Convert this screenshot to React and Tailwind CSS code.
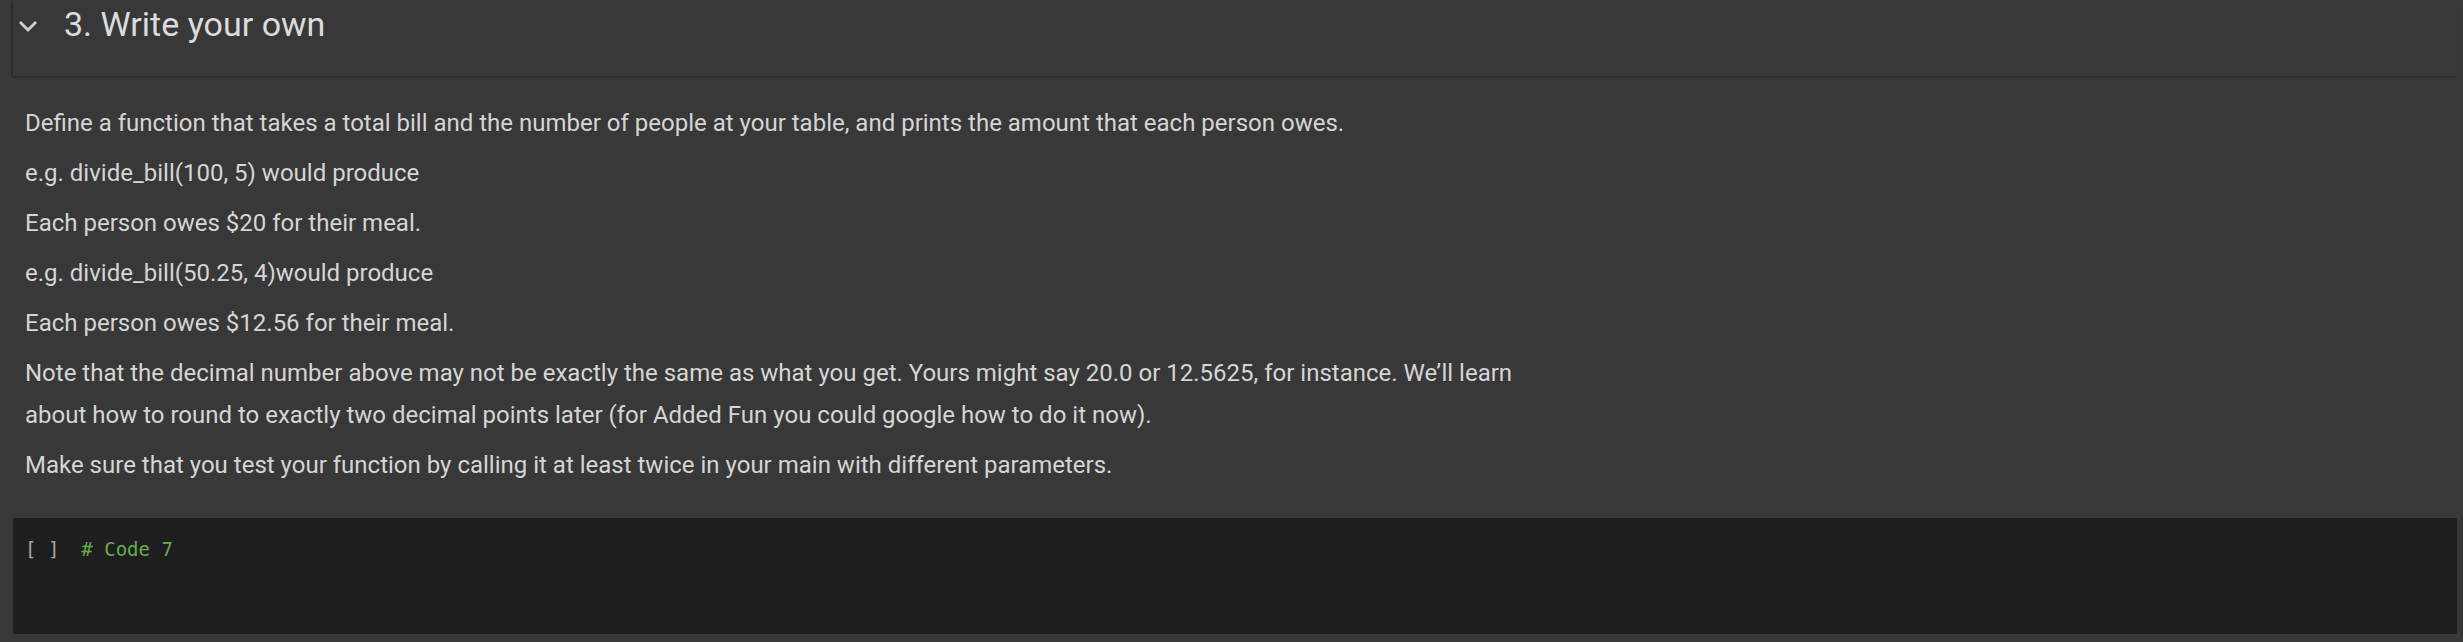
import React from 'react'

function Chevron() {
  return (
    <svg width="20" height="12" viewBox="0 0 20 12" className="text-[#d0d0d0]">
      <path d="M2 2l8 8 8-8" fill="none" stroke="currentColor" strokeWidth="2.8" />
    </svg>
  )
}

function Para({ children }) {
  return <p className="mb-[8px] leading-[42px]">{children}</p>
}

export default function App() {
  return (
    <div className="min-h-[642px] w-full bg-[#383838] font-['Roboto',sans-serif] text-[#d5d5d5]">
      <div className="ml-[13px] mr-[6px] flex h-[76px] items-start gap-[26px] bg-[#383838] pl-[5px] pt-[3px] shadow-[-1px_1px_2px_rgba(0,0,0,0.35)]">
        <div className="mt-[17px]">
          <Chevron />
        </div>
        <h2 className="text-[34px] leading-[42px] text-[#dcdcdc]">3. Write your own</h2>
      </div>

      <div className="max-w-[1560px] px-[25px] pt-[26px] text-[24px]">
        <Para>
          Define a function that takes a total bill and the number of people at your table, and prints the amount that
          each person owes.
        </Para>
        <Para>e.g. divide_bill(100, 5) would produce</Para>
        <Para>Each person owes $20 for their meal.</Para>
        <Para>e.g. divide_bill(50.25, 4)would produce</Para>
        <Para>Each person owes $12.56 for their meal.</Para>
        <Para>
          Note that the decimal number above may not be exactly the same as what you get. Yours might say 20.0 or
          12.5625, for instance. We’ll learn about how to round to exactly two decimal points later (for Added Fun you
          could google how to do it now).
        </Para>
        <Para>Make sure that you test your function by calling it at least twice in your main with different parameters.</Para>
      </div>

      <div className="ml-[13px] mr-[6px] mt-[32px] h-[116px] bg-[#1e1e1e] px-[12px] pt-[17px] font-['DejaVu_Sans_Mono',monospace] text-[19px]">
        <span className="text-[#a8a8a8]">[ ]</span>
        <span className="ml-[22px] text-[#6aab4f]"># Code 7</span>
      </div>
    </div>
  )
}
